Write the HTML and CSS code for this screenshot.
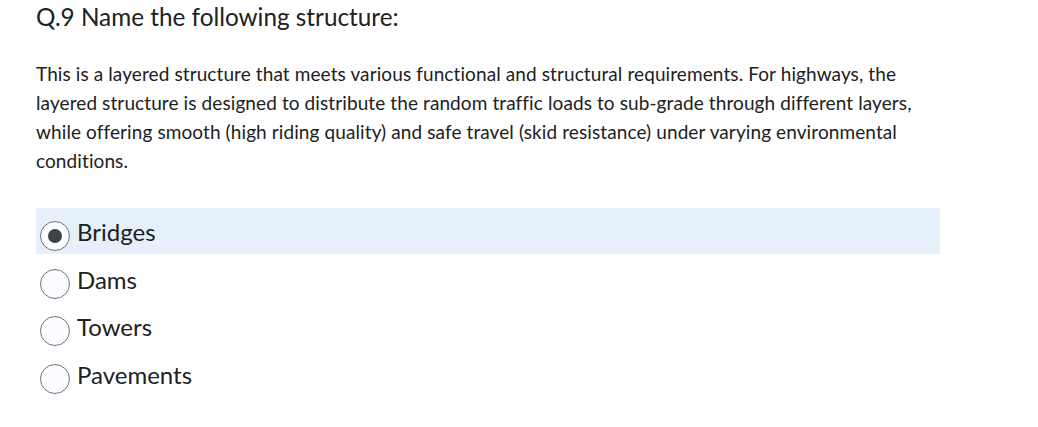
FILE: index.html
```html
<!DOCTYPE html>
<html>
<head>
<meta charset="utf-8">
<link rel="stylesheet" href="styles.css">
</head>
<body>
<div class="question">
  <h2 class="q-title">Q.9 Name the following structure:</h2>
  <p class="q-text">This is a layered structure that meets various functional and structural requirements. For highways, the layered structure is designed to distribute the random traffic loads to sub-grade through different layers, while offering smooth (high riding quality) and safe travel (skid resistance) under varying environmental conditions.</p>
  <div class="options">
    <label class="option selected"><span class="radio checked"></span><span class="opt-label">Bridges</span></label>
    <label class="option"><span class="radio"></span><span class="opt-label">Dams</span></label>
    <label class="option"><span class="radio"></span><span class="opt-label">Towers</span></label>
    <label class="option"><span class="radio"></span><span class="opt-label">Pavements</span></label>
  </div>
</div>
</body>
</html>
```
FILE: styles.css
```css
html, body {
  margin: 0;
  padding: 0;
  background: #ffffff;
}
body {
  font-family: Lato, "Liberation Sans", sans-serif;
  color: #202122;
}
.question {
  padding: 0 0 0 36px;
  width: 904px;
}
.q-title {
  margin: 0;
  padding-top: 1px;
  font-size: 24.3px;
  font-weight: 400;
  line-height: 32px;
  color: #202122;
}
.q-text {
  margin: 26px 0 0 0;
  font-size: 19px;
  letter-spacing: 0.1px;
  line-height: 29px;
  color: #202122;
  width: 890px;
}
.options {
  margin-top: 33px;
  display: flex;
  flex-direction: column;
}
.option {
  display: flex;
  align-items: center;
  height: 47.5px;
  gap: 7px;
  padding-left: 4px;
}
.option.selected {
  background: #e5f0fb;
  height: 46px;
  margin-bottom: 1.5px;
}
.radio {
  width: 30px;
  height: 30px;
  margin-top: 9px;
  box-sizing: border-box;
  border: 1px solid #6f7378;
  border-radius: 50%;
  background: #fbfcff;
  display: flex;
  align-items: center;
  justify-content: center;
  flex: none;
}
.radio.checked::after {
  content: "";
  width: 14px;
  height: 14px;
  border-radius: 50%;
  background: #3f4244;
}
.opt-label {
  font-size: 24px;
  color: #202122;
}
```
